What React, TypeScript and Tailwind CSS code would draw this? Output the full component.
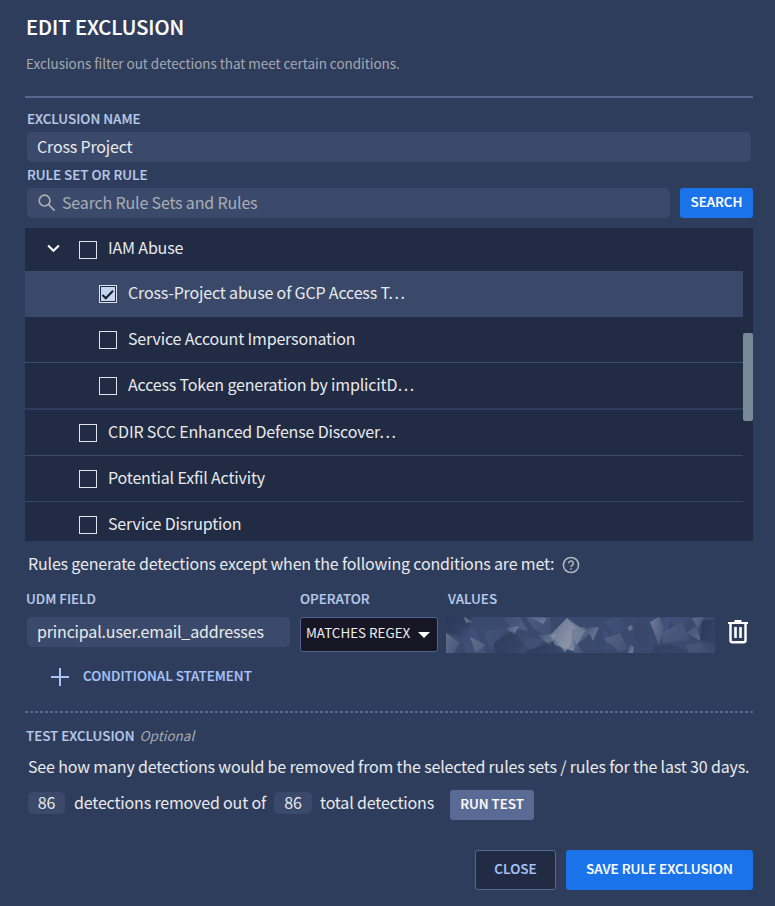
import React from "react";

const FONT = "font-['Noto_Sans_CJK_SC','Noto_Sans',sans-serif]";

function Check({ checked = false }: { checked?: boolean }) {
  return (
    <span className="flex h-[18px] w-[18px] shrink-0 items-center justify-center border border-[#dfe2e8]">
      {checked && (
        <span className="flex h-4 w-4 items-center justify-center border border-[#202a44] bg-[#c3d3f0]">
          <svg width="14" height="13" viewBox="0 0 14 13" fill="none" stroke="#181a2b" strokeWidth="2">
            <path d="M1.5 7l3.3 3.3L12 2.8" />
          </svg>
        </span>
      )}
    </span>
  );
}

const label = "text-[13.4px] leading-[12px] pb-0.5 text-[#b9c9e8] whitespace-nowrap font-medium [-webkit-text-stroke:0.15px_currentColor]";
const body = "text-[16px] leading-[20px] tracking-[-0.165px] text-[#e8eaed] whitespace-nowrap";
const strong = "font-medium [-webkit-text-stroke:0.15px_currentColor]";

const rows = [
  { text: "Cross-Project abuse of GCP Access T…", cls: "h-[46px] bg-[#3a4969] pl-[74px]", lift: "-mt-[5px]", checked: true },
  { text: "Service Account Impersonation", cls: "h-[46px] border-b border-[#3a4b74] pl-[74px] pt-px", lift: "-mt-[5px]" },
  { text: "Access Token generation by implicitD…", cls: "h-[47px] border-b-2 border-[#2e3d5f] pl-[74px] pt-px", lift: "-mt-[5px]" },
  { text: "CDIR SCC Enhanced Defense Discover…", cls: "h-[46px] border-b border-[#3a4b6e] pl-[54px]", lift: "-mt-[3px]" },
  { text: "Potential Exfil Activity", cls: "h-[46px] border-b border-[#33446a] pl-[54px] pt-px", lift: "-mt-[5px]" },
  { text: "Service Disruption", cls: "h-[46px] pl-[54px]", lift: "-mt-[5px]" },
];

/* Shards of the redacted value; each one fades from its own colour. */
const shards: [string, string, number][] = [
  ["M0 0h26l-5 20-21-4z", "#2b3655", 0],
  ["M0 16l14 10-6 10H0z", "#66728f", 0],
  ["M18 0l9 5-7 1z", "#7d89a3", 0],
  ["M14 12l14-2 12 26H20z", "#43537c", 1],
  ["M24 20l16 8-10 8z", "#6a7692", 0],
  ["M38 14l22-3-16 22z", "#43527b", 0],
  ["M58 0h16l8 14-18-4z", "#53618a", 1],
  ["M60 11l13-2-5 9z", "#7f8ba4", 1],
  ["M48 26l18-12 14 12-9 10H50z", "#2c3959", 0],
  ["M68 20l32 2-14 12z", "#44537c", 1],
  ["M80 0h24l2 22-18-10z", "#4f5d84", 0],
  ["M84 0l17 1-4 6z", "#76829c", 1],
  ["M92 18l18-1-6 12z", "#7a869f", 1],
  ["M80 34l26-10 9 12H80z", "#2b3958", 0],
  ["M104 18L121 1l18 13-12 20-18-6z", "#98a1b2", 1],
  ["M121 1l12 14-14 20-14-17z", "#929baf", 1],
  ["M126 12l12-2 7 6-20 16z", "#6d7a94", 0],
  ["M128 23l10 13h-10z", "#5a6788", 0],
  ["M141 11l12-1-6 14z", "#7d89a1", 1],
  ["M156 11l14 12-8 13z", "#42517a", 0],
  ["M158 22l16-6 8 16-8 3z", "#5a6786", 0],
  ["M158 5l15-5 10 13-15 4z", "#43527a", 0],
  ["M182 10l4-2 1 5-4 1z", "#8893a8", 0],
  ["M184 28l4 2-1 6h-5z", "#7e89a0", 1],
  ["M190 4l17 10-6 16-13-8z", "#364569", 0],
  ["M204 5l9-5 5 10-5 18z", "#76829b", 0],
  ["M210 2l14-2-3 20z", "#47567e", 1],
  ["M216 16l20-11 8 18-27 3z", "#526084", 0],
  ["M222 0l21 0-9 16z", "#43527a", 0],
  ["M246 1l12-1-6 12z", "#647190", 0],
  ["M240 16l10-7 5 15z", "#606d8b", 1],
  ["M208 29l18-1 24 8h-44z", "#303e60", 0],
  ["M256 4l13-2v26l-15-5z", "#2a3755", 0],
  ["M240 28l14-2 11 10h-22z", "#4c5a7c", 0],
];

function Mosaic() {
  return (
    <svg width="269" height="36" viewBox="0 0 269 36" className="ml-2 shrink-0">
      <defs>
        {shards.map(([, color, flip], i) => (
          <linearGradient key={i} id={`s${i}`} x1={flip ? 1 : 0} y1={flip ? 1 : 0} x2={flip ? 0 : 1} y2={flip ? 0.3 : 0.7}>
            <stop offset="0" stopColor={color} stopOpacity="0.9" />
            <stop offset="1" stopColor={color} stopOpacity="0.3" />
          </linearGradient>
        ))}
      </defs>
      <rect width="269" height="36" fill="#3a496e" />
      {shards.map(([d], i) => (
        <path key={i} d={d} fill={`url(#s${i})`} />
      ))}
    </svg>
  );
}

export default function App() {
  return (
    <div className={`${FONT} h-[906px] w-[775px] overflow-hidden bg-[#2f3d5c] pl-[25px] pr-[22px]`}>
      <h1 className={`${strong} ml-px h-[55px] pt-[13px] text-[20px] leading-[28px] text-white`}>EDIT EXCLUSION</h1>
      <p className="ml-px h-[41px] text-[13.5px] leading-4 tracking-[-0.04px] text-[#a5a9b1]">Exclusions filter out detections that meet certain conditions.</p>
      <div className="h-0.5 bg-[#566792]" />

      <div className={`${label} ml-0.5 mt-[14px]`}>EXCLUSION NAME</div>
      <div className={`${body} ml-0.5 mr-0.5 mt-[6px] flex h-[30px] items-center rounded-[5px] bg-[#3b4a6a] pb-0.5 pl-[10px]`}>Cross Project</div>
      <div className={`${label} ml-0.5 mt-[6px]`}>RULE SET OR RULE</div>
      <div className="ml-0.5 mt-[6px] flex gap-[10px]">
        <div className={`${body} flex h-[30px] flex-1 items-center rounded-[5px] bg-[#3b4a6a] pl-[11px]`}>
          <svg width="18" height="18" viewBox="0 0 18 18" fill="none" stroke="#a9adb3" strokeWidth="1.7" className="mr-[6px]">
            <circle cx="6.6" cy="6.6" r="5.4" />
            <path d="M10.6 10.6L16.6 16.6" />
          </svg>
          <span className="-mt-0.5 text-[#a9adb5]">Search Rule Sets and Rules</span>
        </div>
        <button className={`${strong} h-[30px] w-[73px] rounded-[3px] bg-[#1a73e8] pb-1 text-[13.4px] leading-[26px] text-white`}>SEARCH</button>
      </div>

      <div className="mt-[10px] flex h-[313px] overflow-hidden bg-[#212b43]">
        <div className="w-[718px]">
          <div className={`${body} flex h-[43px] items-center pl-[22px]`}>
            <svg width="13" height="9" viewBox="0 0 14 9" fill="none" stroke="#fff" strokeWidth="2.2" className="-mt-0.5 mr-[19px]">
              <path d="M1.2 1.2L7 7l5.8-5.8" />
            </svg>
            <Check />
            <span className="ml-[11px] -mt-1.5">IAM Abuse</span>
          </div>
          {rows.map((r) => (
            <div key={r.text} className={`${body} ${r.cls} flex items-center`}>
              <Check checked={r.checked} />
              <span className={`${r.lift} ml-[11px]`}>{r.text}</span>
            </div>
          ))}
        </div>
        <div className="mt-[105px] h-[88px] w-[10px] rounded-[2px] bg-[#788998]" />
      </div>

      <div className={`${body} ml-[3px] mt-[13px] flex h-5 items-center`}>
        <span className="-mt-0.5">Rules generate detections except when the following conditions are met:</span>
        <svg width="18" height="18" viewBox="0 0 18 18" fill="none" stroke="#b3b7bf" strokeWidth="1.5" className="ml-2 mt-0.5">
          <circle cx="9" cy="9" r="7.6" />
          <path d="M6.7 7.3a2.3 2.3 0 1 1 3.6 1.9c-.9.6-1.3 1-1.3 1.9M9 12.2v1.6" />
        </svg>
      </div>

      <div className="mt-[18px] flex">
        <span className={`${label} ml-px w-[274px]`}>UDM FIELD</span>
        <span className={`${label} w-[148px]`}>OPERATOR</span>
        <span className={label}>VALUES</span>
      </div>
      <div className="ml-0.5 mt-[11px] flex h-9">
        <div className={`${body} flex h-[30px] w-[263px] items-center rounded-[5px] bg-[#3b4a6a] pb-0.5 pl-[10px]`}>principal.user.email_addresses</div>
        <div className="ml-[10px] flex h-[35px] w-[138px] items-center whitespace-nowrap rounded-[3px] border border-[#4f6291] bg-[#171625] pl-[5px] text-[13.4px] leading-4 text-[#eceef0]">
          <span className="w-[112px] -mt-[5px]">MATCHES REGEX</span>
          <svg width="12" height="6" viewBox="0 0 12 6" fill="#fff"><path d="M0 0h12L6 6z" /></svg>
        </div>
        <Mosaic />
        <svg width="20" height="24" viewBox="0 0 20 24" fill="none" stroke="#fff" className="ml-[13px] mt-[3px]">
          <path d="M0 3h20M6.5 1h7" strokeWidth="2" />
          <path d="M2.5 3v17.3q0 2 2 2h11q2 0 2-2V3" strokeWidth="2.4" />
          <path d="M7.5 7v11M12.5 7v11" strokeWidth="2.6" />
        </svg>
      </div>
      <div className={`${strong} mt-[14px] flex h-5 items-center pl-[26px] text-[13.4px] leading-4 text-[#a8c4f8]`}>
        <svg width="18" height="18" viewBox="0 0 18 18" stroke="#a8c4f8" strokeWidth="2"><path d="M9 0v18M0 9h18" /></svg>
        <span className="-mt-1 ml-[14px]">CONDITIONAL STATEMENT</span>
      </div>

      <div className="mt-6 h-0.5 bg-[repeating-linear-gradient(90deg,#566792_0_3px,transparent_3px_5px)]" />
      <div className="ml-px mt-[15px] flex h-4 items-center">
        <span className={label}>TEST EXCLUSION</span>
        <span className="-mt-[3px] ml-[5px] text-[13.5px] italic leading-4 text-[#a5a9b1]">Optional</span>
      </div>
      <p className={`${body} ml-[3px] mt-3`}>See how many detections would be removed from the selected rules sets / rules for the last 30 days.</p>
      <div className={`${body} ml-[3px] mt-[14px] flex h-[30px] items-center`}>
        <span className="-mt-1 flex h-[22px] w-[37px] items-center justify-center rounded-[5px] bg-[#3b4a6a] pb-0.5">86</span>
        <span className="-mt-[6px] ml-[9px] w-[200px]">detections removed out of</span>
        <span className="-mt-1 flex h-[22px] w-[38px] items-center justify-center rounded-[5px] bg-[#3b4a6a] pb-0.5">86</span>
        <span className="-mt-[6px] ml-2 w-[130px]">total detections</span>
        <button className={`${strong} h-[30px] w-[84px] rounded-[3px] bg-[#596b95] pb-1 text-[13.4px] leading-[26px] tracking-normal text-white`}>RUN TEST</button>
      </div>
      <div className={`${strong} mt-[30px] flex justify-end gap-[10px] text-[13.5px]`}>
        <button className="h-10 w-[81px] rounded-[3px] border border-[#566792] bg-[#212b43] pb-1 leading-[34px] text-[#a8c4f8]">CLOSE</button>
        <button className="h-10 w-[187px] rounded-[3px] bg-[#1a73e8] pb-1 leading-[36px] text-white">SAVE RULE EXCLUSION</button>
      </div>
    </div>
  );
}
